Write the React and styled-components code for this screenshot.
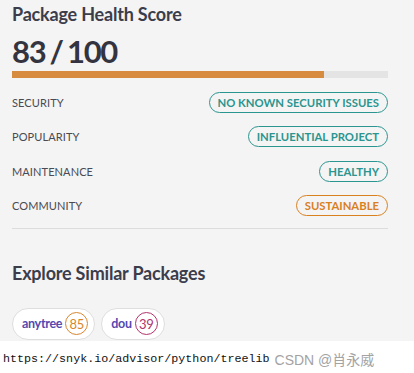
import React from "react";
import styled, { createGlobalStyle } from "styled-components";

const GlobalStyle = createGlobalStyle`
  html, body {
    margin: 0;
    padding: 0;
    background: #f4f4f4;
  }
  body {
    font-family: Lato, "Open Sans", sans-serif;
  }
`;

// Score rows
const rows = [
  { label: "SECURITY", value: "NO KNOWN SECURITY ISSUES", tone: "teal" },
  { label: "POPULARITY", value: "INFLUENTIAL PROJECT", tone: "teal" },
  { label: "MAINTENANCE", value: "HEALTHY", tone: "teal" },
  { label: "COMMUNITY", value: "SUSTAINABLE", tone: "orange" },
];

const similar = [
  { name: "anytree", score: 85, color: "#d8862c" },
  { name: "dou", score: 39, color: "#b2336b" },
];

const tones = {
  teal: "#2b958f",
  orange: "#d9801f",
};

const Page = styled.div`
  width: 414px;
  height: 373px;
  display: flex;
  flex-direction: column;
  overflow: hidden;
`;

const Panel = styled.div`
  flex: 1;
  padding: 0 26px 0 12px;
  display: flex;
  flex-direction: column;
  color: #373846;
`;

const Title = styled.h2`
  margin: 3px 0 0;
  font-size: 18px;
  line-height: 22px;
  font-weight: 700;
  color: #3c3d4b;
  letter-spacing: -0.2px;
`;

const Score = styled.div`
  margin-top: 9px;
  font-size: 31px;
  line-height: 34px;
  font-weight: 700;
  letter-spacing: -1.3px;
  word-spacing: -2px;
  color: #33343f;
`;

const Track = styled.div`
  margin-top: 3px;
  height: 7px;
  background: #e4e4e4;
`;

const Fill = styled.div`
  height: 100%;
  background: #d78b3f;
`;

const Rows = styled.div`
  margin-top: 14px;
  display: flex;
  flex-direction: column;
  gap: 13.3px;
`;

const Row = styled.div`
  display: flex;
  align-items: center;
  justify-content: space-between;
  height: 21px;
`;

const Label = styled.span`
  font-size: 11px;
  color: #4a4a52;
  letter-spacing: 0.1px;
`;

const Badge = styled.span`
  height: 21px;
  box-sizing: border-box;
  display: inline-flex;
  align-items: center;
  padding: 0 8px;
  border: 1.5px solid ${({ $tone }) => tones[$tone]};
  border-radius: 11px;
  font-size: 11.3px;
  font-weight: 700;
  color: ${({ $tone }) => tones[$tone]};
`;

const Divider = styled.hr`
  margin: 12px 0 0;
  border: 0;
  border-top: 1.5px solid #dcdcdc;
`;

const SubTitle = styled.h3`
  margin: 33px 0 0;
  font-size: 18px;
  line-height: 22px;
  font-weight: 700;
  color: #3c3d4b;
  letter-spacing: -0.2px;
`;

const Similar = styled.div`
  margin-top: 24px;
  display: flex;
  gap: 6px;
`;

const Pill = styled.div`
  height: 32px;
  box-sizing: border-box;
  display: inline-flex;
  align-items: center;
  gap: 3px;
  padding: 0 6px 0 9px;
  background: #ffffff;
  border: 1px solid #dedede;
  border-radius: 16px;
`;

const PillName = styled.span`
  font-size: 12.5px;
  font-weight: 700;
  letter-spacing: -0.3px;
  color: #5549b0;
`;

const PillScore = styled.span`
  width: 23px;
  height: 23px;
  box-sizing: border-box;
  border-radius: 50%;
  border: 1.5px solid ${({ $color }) => $color};
  color: ${({ $color }) => $color};
  display: inline-flex;
  align-items: center;
  justify-content: center;
  font-size: 13px;
  letter-spacing: -0.3px;
`;

const Footer = styled.div`
  height: 32px;
  background: #ffffff;
  display: flex;
  align-items: center;
  padding: 4px 0 0 3px;
  box-sizing: border-box;
  white-space: nowrap;
`;

const Url = styled.span`
  font-family: "Liberation Mono", monospace;
  font-size: 11.7px;
  color: #111;
`;

const Mark = styled.span`
  margin-left: 5px;
  font-family: "Liberation Sans", "Noto Sans CJK SC", sans-serif;
  font-size: 14px;
  color: #a3a3a3;
`;

export default function App() {
  return (
    <Page>
      <GlobalStyle />
      <Panel>
        <Title>Package Health Score</Title>
        <Score>83 / 100</Score>
        <Track>
          <Fill style={{ width: "83%" }} />
        </Track>
        <Rows>
          {rows.map((r) => (
            <Row key={r.label}>
              <Label>{r.label}</Label>
              <Badge $tone={r.tone}>{r.value}</Badge>
            </Row>
          ))}
        </Rows>
        <Divider />
        <SubTitle>Explore Similar Packages</SubTitle>
        <Similar>
          {similar.map((p) => (
            <Pill key={p.name}>
              <PillName>{p.name}</PillName>
              <PillScore $color={p.color}>{p.score}</PillScore>
            </Pill>
          ))}
        </Similar>
      </Panel>
      <Footer>
        <Url>https://snyk.io/advisor/python/treelib</Url>
        <Mark>CSDN @肖永威</Mark>
      </Footer>
    </Page>
  );
}
